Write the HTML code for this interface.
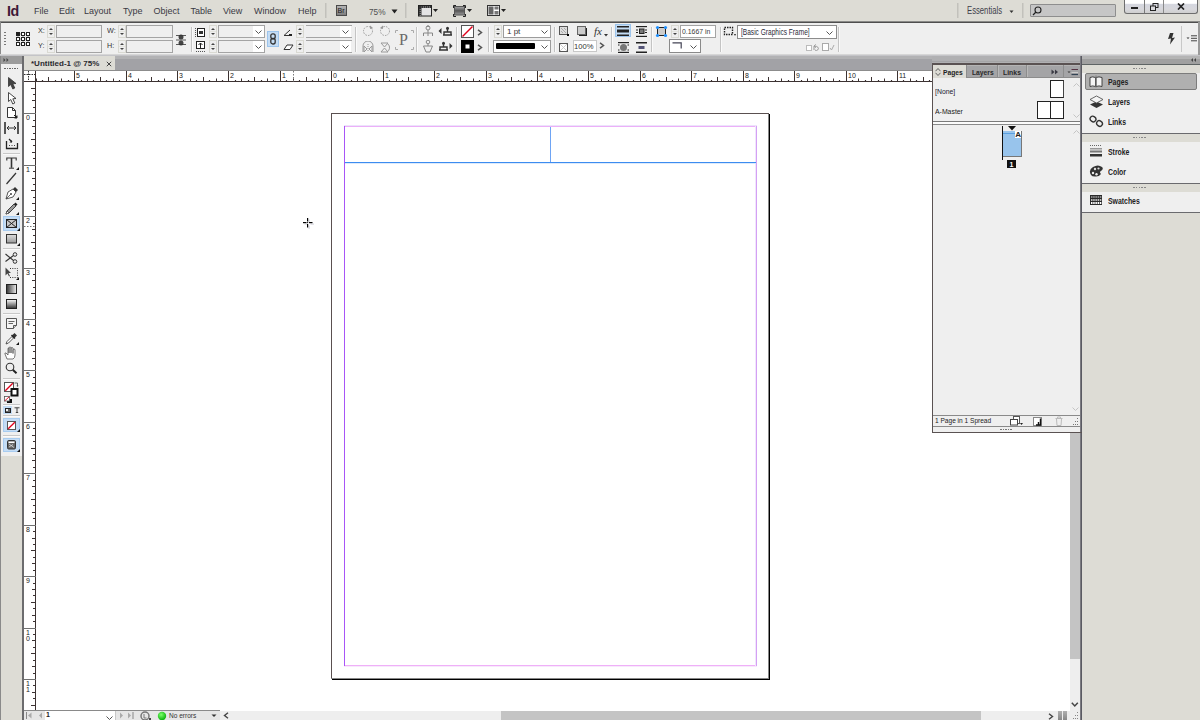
<!DOCTYPE html>
<html><head><meta charset="utf-8"><style>
html,body{margin:0;padding:0;}
body{width:1200px;height:720px;overflow:hidden;position:relative;background:#dddcd5;font-family:"Liberation Sans",sans-serif;}
div{position:absolute;}
.t{position:absolute;white-space:nowrap;line-height:1;}
</style></head><body>
<div style="left:0px;top:0px;width:1200px;height:22px;background:#dddcd5"></div><span class="t" style="left:7px;top:2.5px;font-size:15px;color:#3e1836;font-weight:700;transform:scaleX(0.95);transform-origin:0 0;letter-spacing:-0.6px">Id</span><span class="t" style="left:34px;top:7px;font-size:9px;color:#3a3a44;font-weight:400;">File</span><span class="t" style="left:59px;top:7px;font-size:9px;color:#3a3a44;font-weight:400;">Edit</span><span class="t" style="left:84px;top:7px;font-size:9px;color:#3a3a44;font-weight:400;">Layout</span><span class="t" style="left:123px;top:7px;font-size:9px;color:#3a3a44;font-weight:400;">Type</span><span class="t" style="left:153.5px;top:7px;font-size:9px;color:#3a3a44;font-weight:400;">Object</span><span class="t" style="left:190.5px;top:7px;font-size:9px;color:#3a3a44;font-weight:400;">Table</span><span class="t" style="left:223px;top:7px;font-size:9px;color:#3a3a44;font-weight:400;">View</span><span class="t" style="left:254px;top:7px;font-size:9px;color:#3a3a44;font-weight:400;">Window</span><span class="t" style="left:298px;top:7px;font-size:9px;color:#3a3a44;font-weight:400;">Help</span><div style="left:325px;top:3px;width:1px;height:15px;background:#c2c1bb"></div><div style="left:326px;top:3px;width:1px;height:15px;background:#cfcec8"></div><div style="left:336px;top:5px;width:11px;height:11px;background:linear-gradient(#b4b4b4,#7e7e7e);border:1px solid #4a4a4a;box-sizing:border-box"></div><span class="t" style="left:337.6px;top:6.8px;font-size:7px;color:#1a1a1a;font-weight:400;">Br</span><span class="t" style="left:369px;top:6.5px;font-size:9.5px;color:#505050;font-weight:400;transform:scaleX(0.87);transform-origin:0 0;">75%</span><svg style="position:absolute;left:391px;top:9px;" width="7" height="5" viewBox="0 0 7 5"><path d="M0.5 0.5 L6.5 0.5 L3.5 4.5Z" fill="#222"/></svg><div style="left:405px;top:3px;width:1px;height:15px;background:#c2c1bb"></div><div style="left:406px;top:3px;width:1px;height:15px;background:#cfcec8"></div><svg style="position:absolute;left:418px;top:5px;" width="21" height="12" viewBox="0 0 21 12"><rect x="0.5" y="0.5" width="13" height="10.5" fill="#e4e4e4" stroke="#222"/><rect x="1" y="1" width="12" height="2" fill="#333"/><path d="M3 2 H13" stroke="#bbb" stroke-width="0.8" stroke-dasharray="1 1"/><rect x="1" y="1" width="2.5" height="10" fill="#333"/><path d="M2.2 4 V11" stroke="#bbb" stroke-width="0.8" stroke-dasharray="1 1"/><path d="M15 4 L20 4 L17.5 7Z" fill="#222"/></svg><svg style="position:absolute;left:453px;top:5px;" width="20" height="12" viewBox="0 0 20 12"><rect x="1.5" y="1.5" width="10" height="8.5" fill="url(#g1)" stroke="#555"/><path d="M0.5 3 V0.5 H3 M10 0.5 H12.5 V3 M0.5 9 V11.5 H3 M10 11.5 H12.5 V9" fill="none" stroke="#222"/><path d="M14 4 L19 4 L16.5 7Z" fill="#222"/><defs><linearGradient id="g1" x1="0" y1="0" x2="0" y2="1"><stop offset="0" stop-color="#aaa"/><stop offset="0.5" stop-color="#555"/><stop offset="1" stop-color="#999"/></linearGradient></defs></svg><svg style="position:absolute;left:487px;top:5px;" width="20" height="12" viewBox="0 0 20 12"><rect x="0.5" y="0.5" width="12" height="10" fill="#fff" stroke="#333"/><rect x="1.5" y="1.5" width="5" height="8" fill="#666"/><rect x="7.5" y="1.5" width="4" height="3" fill="#777"/><rect x="7.5" y="6" width="4" height="3.5" fill="#777"/><path d="M14 4 L19 4 L16.5 7Z" fill="#222"/></svg><div style="left:957px;top:3px;width:1px;height:15px;background:#c2c1bb"></div><div style="left:958px;top:3px;width:1px;height:15px;background:#cfcec8"></div><span class="t" style="left:967px;top:5.5px;font-size:10px;color:#3e3e4a;font-weight:400;transform:scaleX(0.77);transform-origin:0 0;">Essentials</span><svg style="position:absolute;left:1009px;top:10px;" width="5" height="4" viewBox="0 0 5 4"><path d="M0.5 0.5 L4.5 0.5 L2.5 3Z" fill="#333"/></svg><div style="left:1022px;top:3px;width:1px;height:15px;background:#c2c1bb"></div><div style="left:1023px;top:3px;width:1px;height:15px;background:#cfcec8"></div><div style="left:1030px;top:4px;width:86px;height:13px;background:#c6c6c6;border:1px solid #8e8e8e;box-sizing:border-box;border-radius:1px"></div><svg style="position:absolute;left:1032px;top:6px;" width="10" height="10" viewBox="0 0 10 10"><circle cx="6" cy="4" r="3" fill="none" stroke="#222" stroke-width="1.1"/><path d="M4 6 L1 9" stroke="#222" stroke-width="1.3"/></svg><div style="left:1124px;top:0px;width:74px;height:14px;background:linear-gradient(#ffffff 0,#ffffff 25%,#d4d6de 35%,#d8d8dc 70%,#cfcfcf 100%);border:1px solid #6e6e6e;border-top:none;box-sizing:border-box;border-radius:0 0 3px 3px"></div><div style="left:1144px;top:0px;width:1px;height:13px;background:#7a7a7a"></div><div style="left:1163px;top:0px;width:1px;height:13px;background:#8a8a8a"></div><div style="left:1131px;top:7px;width:7px;height:2px;background:#222"></div><svg style="position:absolute;left:1150px;top:3px;" width="9" height="8" viewBox="0 0 9 8"><rect x="3" y="0.5" width="5" height="4" fill="none" stroke="#222" stroke-width="1"/><rect x="0.5" y="3" width="5" height="4.5" fill="#d8d8dc" stroke="#222" stroke-width="1"/></svg><svg style="position:absolute;left:1177px;top:3px;" width="8" height="7" viewBox="0 0 8 7"><path d="M1 0.5 L7 6.5 M7 0.5 L1 6.5" stroke="#222" stroke-width="1.7"/></svg><div style="left:0px;top:22px;width:1200px;height:33px;background:#efefef"></div><div style="left:0px;top:21px;width:1200px;height:1px;background:#8a8a88"></div><div style="left:0px;top:22px;width:1200px;height:1px;background:#4e4e4e"></div><div style="left:0px;top:22px;width:1px;height:34px;background:#8a8a8a"></div><div style="left:0px;top:54px;width:1200px;height:1px;background:#d6d6d6"></div><div style="left:1198px;top:22px;width:2px;height:33px;background:#9a9a9a"></div><div style="left:0px;top:55px;width:1200px;height:1px;background:#c4c4c8"></div><div style="left:4px;top:32px;width:2px;height:1px;background:#777"></div><div style="left:4px;top:35px;width:2px;height:1px;background:#777"></div><div style="left:4px;top:38px;width:2px;height:1px;background:#777"></div><div style="left:4px;top:41px;width:2px;height:1px;background:#777"></div><div style="left:4px;top:44px;width:2px;height:1px;background:#777"></div><svg style="position:absolute;left:0px;top:0px;" width="32" height="50" viewBox="0 0 32 50"><path d="M18 34 V44 M23 34 V44 M28 34 V44 M18 34 H28 M18 39 H28 M18 44 H28" stroke="#999" stroke-width="1"/><rect x="16" y="32" width="4" height="4" fill="#222"/><rect x="21" y="32" width="4" height="4" fill="#222"/><rect x="22" y="33" width="2" height="2" fill="#fff"/><rect x="26" y="32" width="4" height="4" fill="#222"/><rect x="27" y="33" width="2" height="2" fill="#fff"/><rect x="16" y="37" width="4" height="4" fill="#222"/><rect x="17" y="38" width="2" height="2" fill="#fff"/><rect x="21" y="37" width="4" height="4" fill="#222"/><rect x="22" y="38" width="2" height="2" fill="#fff"/><rect x="26" y="37" width="4" height="4" fill="#222"/><rect x="27" y="38" width="2" height="2" fill="#fff"/><rect x="16" y="42" width="4" height="4" fill="#222"/><rect x="17" y="43" width="2" height="2" fill="#fff"/><rect x="21" y="42" width="4" height="4" fill="#222"/><rect x="22" y="43" width="2" height="2" fill="#fff"/><rect x="26" y="42" width="4" height="4" fill="#222"/><rect x="27" y="43" width="2" height="2" fill="#fff"/></svg><span class="t" style="left:38px;top:27px;font-size:8px;color:#333;font-weight:400;transform:scaleX(0.9);transform-origin:0 0;">X:</span><span class="t" style="left:38px;top:42px;font-size:8px;color:#333;font-weight:400;transform:scaleX(0.9);transform-origin:0 0;">Y:</span><div style="left:47px;top:25px;width:8px;height:13px;border:1px solid #d9d9d2;box-sizing:border-box;background:#efefef"></div><svg style="position:absolute;left:49px;top:28px;" width="4" height="2" viewBox="0 0 4 2"><path d="M0 2 L2 0 L4 2Z" fill="#444"/></svg><svg style="position:absolute;left:49px;top:33px;" width="4" height="2" viewBox="0 0 4 2"><path d="M0 0 L4 0 L2 2Z" fill="#444"/></svg><div style="left:48px;top:31px;width:6px;height:1px;background:#e4e4de"></div><div style="left:56px;top:25px;width:46px;height:13px;background:#efefef;border:1px solid #a4a4a4;box-sizing:border-box"></div><div style="left:47px;top:40px;width:8px;height:13px;border:1px solid #d9d9d2;box-sizing:border-box;background:#efefef"></div><svg style="position:absolute;left:49px;top:43px;" width="4" height="2" viewBox="0 0 4 2"><path d="M0 2 L2 0 L4 2Z" fill="#444"/></svg><svg style="position:absolute;left:49px;top:48px;" width="4" height="2" viewBox="0 0 4 2"><path d="M0 0 L4 0 L2 2Z" fill="#444"/></svg><div style="left:48px;top:46px;width:6px;height:1px;background:#e4e4de"></div><div style="left:56px;top:40px;width:46px;height:13px;background:#efefef;border:1px solid #a4a4a4;box-sizing:border-box"></div><span class="t" style="left:107px;top:27px;font-size:8px;color:#333;font-weight:400;transform:scaleX(0.9);transform-origin:0 0;">W:</span><span class="t" style="left:107px;top:42px;font-size:8px;color:#333;font-weight:400;transform:scaleX(0.9);transform-origin:0 0;">H:</span><div style="left:118px;top:25px;width:8px;height:13px;border:1px solid #d9d9d2;box-sizing:border-box;background:#efefef"></div><svg style="position:absolute;left:120px;top:28px;" width="4" height="2" viewBox="0 0 4 2"><path d="M0 2 L2 0 L4 2Z" fill="#444"/></svg><svg style="position:absolute;left:120px;top:33px;" width="4" height="2" viewBox="0 0 4 2"><path d="M0 0 L4 0 L2 2Z" fill="#444"/></svg><div style="left:119px;top:31px;width:6px;height:1px;background:#e4e4de"></div><div style="left:126px;top:25px;width:47px;height:13px;background:#efefef;border:1px solid #a4a4a4;box-sizing:border-box"></div><div style="left:118px;top:40px;width:8px;height:13px;border:1px solid #d9d9d2;box-sizing:border-box;background:#efefef"></div><svg style="position:absolute;left:120px;top:43px;" width="4" height="2" viewBox="0 0 4 2"><path d="M0 2 L2 0 L4 2Z" fill="#444"/></svg><svg style="position:absolute;left:120px;top:48px;" width="4" height="2" viewBox="0 0 4 2"><path d="M0 0 L4 0 L2 2Z" fill="#444"/></svg><div style="left:119px;top:46px;width:6px;height:1px;background:#e4e4de"></div><div style="left:126px;top:40px;width:47px;height:13px;background:#efefef;border:1px solid #a4a4a4;box-sizing:border-box"></div><svg style="position:absolute;left:175px;top:34px;" width="12" height="12" viewBox="0 0 12 12"><ellipse cx="6" cy="3" rx="2.5" ry="2.5" fill="#444"/><ellipse cx="6" cy="9" rx="2.5" ry="2.5" fill="#444"/><path d="M1 1.5 L11 1.5 M1 6 L11 6 M1 10.5 L11 10.5" stroke="#333" stroke-width="0.8"/></svg><div style="left:191px;top:27px;width:1px;height:25px;background:#c4c4c4"></div><div style="left:192px;top:27px;width:1px;height:25px;background:#fafafa"></div><svg style="position:absolute;left:195px;top:27px;" width="11" height="11" viewBox="0 0 11 11"><rect x="2.5" y="1.5" width="7" height="8" fill="#fff" stroke="#222"/><rect x="4" y="4" width="4" height="3" fill="#333"/><path d="M0.5 1 V10" stroke="#555" stroke-dasharray="1 1"/></svg><svg style="position:absolute;left:195px;top:41px;" width="11" height="12" viewBox="0 0 11 12"><rect x="1.5" y="0.5" width="8" height="7" fill="#fff" stroke="#222"/><path d="M5.5 2 V7 M3.5 4 L5.5 2 L7.5 4" stroke="#222" fill="none"/><path d="M1 10.5 H10" stroke="#555" stroke-dasharray="1 1"/></svg><div style="left:209px;top:25px;width:8px;height:13px;border:1px solid #d9d9d2;box-sizing:border-box;background:#efefef"></div><svg style="position:absolute;left:211px;top:28px;" width="4" height="2" viewBox="0 0 4 2"><path d="M0 2 L2 0 L4 2Z" fill="#444"/></svg><svg style="position:absolute;left:211px;top:33px;" width="4" height="2" viewBox="0 0 4 2"><path d="M0 0 L4 0 L2 2Z" fill="#444"/></svg><div style="left:210px;top:31px;width:6px;height:1px;background:#e4e4de"></div><div style="left:218px;top:25px;width:47px;height:13px;background:#efefef;border:1px solid #a4a4a4;box-sizing:border-box"></div><div style="left:253px;top:26px;width:11px;height:11px;background:#fff"></div><svg style="position:absolute;left:255px;top:30px;" width="7" height="4" viewBox="0 0 7 4"><path d="M0.5 0.5 L3.5 3.5 L6.5 0.5" fill="none" stroke="#555" stroke-width="1"/></svg><div style="left:209px;top:40px;width:8px;height:13px;border:1px solid #d9d9d2;box-sizing:border-box;background:#efefef"></div><svg style="position:absolute;left:211px;top:43px;" width="4" height="2" viewBox="0 0 4 2"><path d="M0 2 L2 0 L4 2Z" fill="#444"/></svg><svg style="position:absolute;left:211px;top:48px;" width="4" height="2" viewBox="0 0 4 2"><path d="M0 0 L4 0 L2 2Z" fill="#444"/></svg><div style="left:210px;top:46px;width:6px;height:1px;background:#e4e4de"></div><div style="left:218px;top:40px;width:47px;height:13px;background:#efefef;border:1px solid #a4a4a4;box-sizing:border-box"></div><div style="left:253px;top:41px;width:11px;height:11px;background:#fff"></div><svg style="position:absolute;left:255px;top:45px;" width="7" height="4" viewBox="0 0 7 4"><path d="M0.5 0.5 L3.5 3.5 L6.5 0.5" fill="none" stroke="#555" stroke-width="1"/></svg><div style="left:267px;top:31px;width:12px;height:16px;background:#c4dcf4;border:1px solid #9cc4ec;box-sizing:border-box"></div><svg style="position:absolute;left:270px;top:33px;" width="6" height="12" viewBox="0 0 6 12"><rect x="0.8" y="0.8" width="4.4" height="5" rx="2" fill="none" stroke="#333" stroke-width="1.3"/><rect x="0.8" y="5.5" width="4.4" height="5.5" rx="2" fill="none" stroke="#333" stroke-width="1.3"/></svg><svg style="position:absolute;left:283px;top:29px;" width="10" height="8" viewBox="0 0 10 8"><path d="M1 6.5 L7 1 M1 6.5 H9" stroke="#333" stroke-width="1"/><rect x="6" y="5" width="3" height="2" fill="#222"/></svg><svg style="position:absolute;left:283px;top:44px;" width="11" height="7" viewBox="0 0 11 7"><path d="M1 5.5 L4 1 H10 L7 5.5Z" fill="#fff" stroke="#333" stroke-width="1"/></svg><div style="left:296px;top:25px;width:8px;height:13px;border:1px solid #d9d9d2;box-sizing:border-box;background:#efefef"></div><svg style="position:absolute;left:298px;top:28px;" width="4" height="2" viewBox="0 0 4 2"><path d="M0 2 L2 0 L4 2Z" fill="#444"/></svg><svg style="position:absolute;left:298px;top:33px;" width="4" height="2" viewBox="0 0 4 2"><path d="M0 0 L4 0 L2 2Z" fill="#444"/></svg><div style="left:297px;top:31px;width:6px;height:1px;background:#e4e4de"></div><div style="left:306px;top:25px;width:46px;height:13px;background:#efefef;border:1px solid #a4a4a4;border-left:none;border-right:none;box-sizing:border-box"></div><div style="left:340px;top:26px;width:11px;height:11px;background:#fff"></div><svg style="position:absolute;left:342px;top:30px;" width="7" height="4" viewBox="0 0 7 4"><path d="M0.5 0.5 L3.5 3.5 L6.5 0.5" fill="none" stroke="#555" stroke-width="1"/></svg><div style="left:296px;top:40px;width:8px;height:13px;border:1px solid #d9d9d2;box-sizing:border-box;background:#efefef"></div><svg style="position:absolute;left:298px;top:43px;" width="4" height="2" viewBox="0 0 4 2"><path d="M0 2 L2 0 L4 2Z" fill="#444"/></svg><svg style="position:absolute;left:298px;top:48px;" width="4" height="2" viewBox="0 0 4 2"><path d="M0 0 L4 0 L2 2Z" fill="#444"/></svg><div style="left:297px;top:46px;width:6px;height:1px;background:#e4e4de"></div><div style="left:306px;top:40px;width:46px;height:13px;background:#efefef;border:1px solid #a4a4a4;border-left:none;border-right:none;box-sizing:border-box"></div><div style="left:340px;top:41px;width:11px;height:11px;background:#fff"></div><svg style="position:absolute;left:342px;top:45px;" width="7" height="4" viewBox="0 0 7 4"><path d="M0.5 0.5 L3.5 3.5 L6.5 0.5" fill="none" stroke="#555" stroke-width="1"/></svg><div style="left:355px;top:27px;width:1px;height:25px;background:#c4c4c4"></div><div style="left:356px;top:27px;width:1px;height:25px;background:#fafafa"></div><svg style="position:absolute;left:362px;top:25px;" width="12" height="12" viewBox="0 0 12 12"><circle cx="6" cy="6" r="4.5" fill="none" stroke="#999" stroke-dasharray="1.5 1.2"/><path d="M8 0.5 L11 3 L8 4Z" fill="#999"/></svg><svg style="position:absolute;left:379px;top:25px;" width="12" height="12" viewBox="0 0 12 12"><circle cx="6" cy="6" r="4.5" fill="none" stroke="#999" stroke-dasharray="1.5 1.2"/><path d="M4 0.5 L1 3 L4 4Z" fill="#999"/></svg><svg style="position:absolute;left:362px;top:41px;" width="12" height="12" viewBox="0 0 12 12"><path d="M1 11 V5 A5 5 0 0 1 11 5 V11" fill="none" stroke="#999"/><path d="M2 5 L5 8 L2 11Z M10 5 L7 8 L10 11Z" fill="none" stroke="#999"/><path d="M6 3 V11" stroke="#999" stroke-dasharray="1 1"/></svg><svg style="position:absolute;left:379px;top:41px;" width="12" height="12" viewBox="0 0 12 12"><path d="M2 2 H9 L5.5 6 Z M2 11 H9 L5.5 7Z" fill="none" stroke="#999"/><path d="M9 3 A5 5 0 0 1 8 11" fill="none" stroke="#999"/></svg><svg style="position:absolute;left:394px;top:29px;" width="21" height="22" viewBox="0 0 21 22"><path d="M1.5 4 V1.5 H4 M17 1.5 H19.5 V4 M1.5 18 V20.5 H4 M17 20.5 H19.5 V18" stroke="#aaa" fill="none"/></svg><span class="t" style="left:399px;top:32px;font-size:16px;color:#6a6a6a;font-weight:400;font-family:'Liberation Serif',serif;">P</span><div style="left:416px;top:27px;width:1px;height:25px;background:#c4c4c4"></div><div style="left:417px;top:27px;width:1px;height:25px;background:#fafafa"></div><svg style="position:absolute;left:422px;top:25px;" width="12" height="13" viewBox="0 0 12 13"><circle cx="6" cy="3" r="2" fill="none" stroke="#888"/><path d="M6 5 V8 M1.5 8 H10.5 M1.5 8 V11 M6 8 V11 M10.5 8 V11" stroke="#888" fill="none"/><path d="M4 2 L6 0 L8 2" fill="#888"/></svg><svg style="position:absolute;left:422px;top:40px;" width="12" height="13" viewBox="0 0 12 13"><circle cx="6" cy="2" r="1.8" fill="none" stroke="#888"/><path d="M6 4 V6 M1.5 6 H10.5 L8 12 H4 Z" stroke="#888" fill="none"/></svg><svg style="position:absolute;left:438px;top:26px;" width="15" height="11" viewBox="0 0 15 11"><path d="M0.5 5 L3.5 2 V8Z" fill="#333"/><path d="M5 9 H14 M6 9 V6 H13 V9 M9.5 6 V3" stroke="#333" fill="none" stroke-width="1.4"/><circle cx="9.5" cy="2.2" r="1.5" fill="#333"/></svg><svg style="position:absolute;left:438px;top:41px;" width="15" height="11" viewBox="0 0 15 11"><path d="M14.5 5 L11.5 2 V8Z" fill="#333"/><path d="M1 9 H10 M2 9 V6 H9 V9 M5.5 6 V3" stroke="#333" fill="none" stroke-width="1.4"/><circle cx="5.5" cy="2.2" r="1.5" fill="#333"/></svg><div style="left:456px;top:27px;width:1px;height:25px;background:#c4c4c4"></div><div style="left:457px;top:27px;width:1px;height:25px;background:#fafafa"></div><svg style="position:absolute;left:461px;top:25px;" width="13" height="13" viewBox="0 0 13 13"><rect x="0.5" y="0.5" width="12" height="12" fill="#fff" stroke="#555"/><path d="M1.5 11.5 L11.5 1.5" stroke="#e0001a" stroke-width="1.4"/></svg><svg style="position:absolute;left:461px;top:40px;" width="13" height="13" viewBox="0 0 13 13"><rect x="0" y="0" width="13" height="13" fill="#000"/><rect x="4.5" y="4.5" width="4" height="4" fill="#fff"/></svg><svg style="position:absolute;left:477px;top:29px;" width="6" height="7" viewBox="0 0 6 7"><path d="M1 0.8 L4.5 3.5 L1 6.2" fill="none" stroke="#555" stroke-width="1.5"/></svg><svg style="position:absolute;left:477px;top:44px;" width="6" height="7" viewBox="0 0 6 7"><path d="M1 0.8 L4.5 3.5 L1 6.2" fill="none" stroke="#555" stroke-width="1.5"/></svg><div style="left:488px;top:27px;width:1px;height:25px;background:#c4c4c4"></div><div style="left:489px;top:27px;width:1px;height:25px;background:#fafafa"></div><div style="left:494px;top:25px;width:8px;height:13px;border:1px solid #d9d9d2;box-sizing:border-box;background:#efefef"></div><svg style="position:absolute;left:496px;top:28px;" width="4" height="2" viewBox="0 0 4 2"><path d="M0 2 L2 0 L4 2Z" fill="#444"/></svg><svg style="position:absolute;left:496px;top:33px;" width="4" height="2" viewBox="0 0 4 2"><path d="M0 0 L4 0 L2 2Z" fill="#444"/></svg><div style="left:495px;top:31px;width:6px;height:1px;background:#e4e4de"></div><div style="left:503px;top:25px;width:48px;height:13px;background:#fff;border:1px solid #9c9c9c;box-sizing:border-box"></div><span class="t" style="left:507px;top:27.5px;font-size:8px;color:#333;font-weight:400;">1 pt</span><svg style="position:absolute;left:541px;top:30px;" width="7" height="4" viewBox="0 0 7 4"><path d="M0.5 0.5 L3.5 3.5 L6.5 0.5" fill="none" stroke="#555" stroke-width="1"/></svg><div style="left:493px;top:40px;width:58px;height:13px;background:#fff;border:1px solid #9c9c9c;box-sizing:border-box"></div><div style="left:496px;top:43px;width:39px;height:6px;background:#000;border-radius:1px"></div><svg style="position:absolute;left:541px;top:45px;" width="7" height="4" viewBox="0 0 7 4"><path d="M0.5 0.5 L3.5 3.5 L6.5 0.5" fill="none" stroke="#555" stroke-width="1"/></svg><div style="left:554px;top:27px;width:1px;height:25px;background:#c4c4c4"></div><div style="left:555px;top:27px;width:1px;height:25px;background:#fafafa"></div><svg style="position:absolute;left:559px;top:26px;" width="11" height="11" viewBox="0 0 11 11"><rect x="0.5" y="0.5" width="8" height="8" fill="#ddd" stroke="#555"/><path d="M2 2 L7 7 M2 5 L4 7 M5 2 L7 4" stroke="#aaa"/><rect x="8" y="8" width="2" height="2" fill="#000"/></svg><svg style="position:absolute;left:577px;top:26px;" width="10" height="11" viewBox="0 0 10 11"><rect x="2" y="2" width="8" height="8" fill="#222"/><rect x="0.5" y="0.5" width="8" height="8" fill="#ccc" stroke="#666"/></svg><span class="t" style="left:594px;top:26px;font-size:11px;color:#333;font-weight:400;font-style:italic;font-family:'Liberation Serif',serif;">fx</span><svg style="position:absolute;left:604px;top:34px;" width="4" height="3" viewBox="0 0 4 3"><path d="M0 0 H4 L2 2.5Z" fill="#333"/></svg><svg style="position:absolute;left:559px;top:43px;" width="9" height="9" viewBox="0 0 9 9"><rect x="0.5" y="0.5" width="8" height="8" fill="#fff" stroke="#555"/><path d="M1 1 L8 8 M8 1 L1 8" stroke="#ccc"/></svg><div style="left:573px;top:40px;width:24px;height:12px;background:#fff;border:1px solid #c8c8c8;box-sizing:border-box"></div><span class="t" style="left:574px;top:43px;font-size:8px;color:#333;font-weight:400;transform:scaleX(0.95);transform-origin:0 0;">100%</span><svg style="position:absolute;left:599px;top:42px;" width="6" height="7" viewBox="0 0 6 7"><path d="M1 0.8 L4.5 3.5 L1 6.2" fill="none" stroke="#555" stroke-width="1.5"/></svg><div style="left:611px;top:27px;width:1px;height:25px;background:#c4c4c4"></div><div style="left:612px;top:27px;width:1px;height:25px;background:#fafafa"></div><div style="left:615px;top:24px;width:16px;height:13px;background:#c4dcf4;border:1px solid #9cc4ec;box-sizing:border-box"></div><svg style="position:absolute;left:617px;top:26px;" width="12" height="10" viewBox="0 0 12 10"><rect x="0" y="0" width="12" height="1.5" fill="#222"/><rect x="0" y="3.5" width="12" height="3" fill="#222"/><rect x="0" y="8.5" width="12" height="1.5" fill="#222"/></svg><svg style="position:absolute;left:636px;top:26px;" width="11" height="11" viewBox="0 0 11 11"><rect x="0" y="0" width="11" height="1.2" fill="#222"/><rect x="0" y="9.8" width="11" height="1.2" fill="#222"/><rect x="3.5" y="3" width="4.5" height="4.5" fill="#777" stroke="#222"/><path d="M0 4 H2 M0 6.5 H2 M9 4 H11 M9 6.5 H11" stroke="#222"/></svg><svg style="position:absolute;left:618px;top:42px;" width="11" height="11" viewBox="0 0 11 11"><rect x="0" y="0" width="11" height="1.2" fill="#222"/><rect x="0" y="9.8" width="11" height="1.2" fill="#222"/><circle cx="5.5" cy="5.5" r="3.5" fill="#777"/><path d="M0 3 H1.5 M0 8 H1.5 M9.5 3 H11 M9.5 8 H11" stroke="#222"/></svg><svg style="position:absolute;left:636px;top:42px;" width="11" height="11" viewBox="0 0 11 11"><rect x="0" y="0" width="11" height="1.5" fill="#222"/><rect x="0" y="9.5" width="11" height="1.5" fill="#222"/><rect x="2.5" y="4" width="6" height="3" fill="#557"/></svg><div style="left:651px;top:27px;width:1px;height:25px;background:#c4c4c4"></div><div style="left:652px;top:27px;width:1px;height:25px;background:#fafafa"></div><svg style="position:absolute;left:655px;top:25px;" width="13" height="13" viewBox="0 0 13 13"><rect x="2.5" y="2.5" width="8" height="8" fill="#ccc" stroke="#222"/><circle cx="2.5" cy="2.5" r="1.6" fill="#1e90ff"/><circle cx="10.5" cy="2.5" r="1.6" fill="#1e90ff"/><circle cx="2.5" cy="10.5" r="1.6" fill="#1e90ff"/><circle cx="10.5" cy="10.5" r="1.6" fill="#1e90ff"/></svg><div style="left:671px;top:25px;width:8px;height:13px;border:1px solid #d9d9d2;box-sizing:border-box;background:#efefef"></div><svg style="position:absolute;left:673px;top:28px;" width="4" height="2" viewBox="0 0 4 2"><path d="M0 2 L2 0 L4 2Z" fill="#444"/></svg><svg style="position:absolute;left:673px;top:33px;" width="4" height="2" viewBox="0 0 4 2"><path d="M0 0 L4 0 L2 2Z" fill="#444"/></svg><div style="left:672px;top:31px;width:6px;height:1px;background:#e4e4de"></div><div style="left:680px;top:25px;width:36px;height:13px;background:#fff;border:1px solid #a4a4a4;box-sizing:border-box"></div><span class="t" style="left:682px;top:27.5px;font-size:8px;color:#3a3a3a;font-weight:400;transform:scaleX(0.86);transform-origin:0 0;">0.1667 in</span><div style="left:669px;top:39px;width:32px;height:14px;background:#fff;border:1px solid #8a8a8a;box-sizing:border-box"></div><svg style="position:absolute;left:672px;top:42px;" width="11" height="7" viewBox="0 0 11 7"><path d="M0.5 0.8 H9.2 V6.5" fill="none" stroke="#445" stroke-width="1.2"/></svg><svg style="position:absolute;left:690px;top:45px;" width="7" height="4" viewBox="0 0 7 4"><path d="M0.5 0.5 L3.5 3.5 L6.5 0.5" fill="none" stroke="#555" stroke-width="1"/></svg><div style="left:720px;top:27px;width:1px;height:25px;background:#c4c4c4"></div><div style="left:721px;top:27px;width:1px;height:25px;background:#fafafa"></div><svg style="position:absolute;left:723px;top:26px;" width="14" height="11" viewBox="0 0 14 11"><rect x="1.5" y="1.5" width="8" height="7" fill="#eee" stroke="#222" stroke-dasharray="1.5 1" stroke-width="1.4"/><path d="M11 8 L13 8 L12 10Z" fill="#222"/></svg><div style="left:737px;top:25px;width:100px;height:14px;background:#fff;border:1px solid #8c8c8c;box-sizing:border-box"></div><span class="t" style="left:741px;top:27.5px;font-size:9px;color:#2a2a38;font-weight:400;transform:scaleX(0.73);transform-origin:0 0;">[Basic Graphics Frame]</span><svg style="position:absolute;left:826px;top:31px;" width="7" height="4" viewBox="0 0 7 4"><path d="M0.5 0.5 L3.5 3.5 L6.5 0.5" fill="none" stroke="#555" stroke-width="1"/></svg><svg style="position:absolute;left:806px;top:44px;" width="13" height="7" viewBox="0 0 13 7"><rect x="0.5" y="1.5" width="5" height="5" fill="#fff" stroke="#bbb"/><path d="M8 6 V2 L10 0.5 M8 2 L10 3.5" stroke="#999" fill="none"/><path d="M9 3 A2 2 0 1 1 9 6" stroke="#999" fill="none"/></svg><svg style="position:absolute;left:822px;top:43px;" width="13" height="8" viewBox="0 0 13 8"><rect x="0.5" y="0.5" width="6" height="7" fill="#fff" stroke="#aaa"/><path d="M8 5 L9.5 7 L12 2" stroke="#aaa" fill="none"/></svg><div style="left:838px;top:27px;width:1px;height:25px;background:#c4c4c4"></div><div style="left:839px;top:27px;width:1px;height:25px;background:#fafafa"></div><svg style="position:absolute;left:1167px;top:33px;" width="9" height="12" viewBox="0 0 9 12"><path d="M3 0 L1 6 L4 5.5 L3 11.5 L8 4.5 L5 5 L6.5 0Z" fill="#333"/></svg><div style="left:1181px;top:26px;width:1px;height:26px;background:#c8c8c8"></div><svg style="position:absolute;left:1186px;top:35px;" width="12" height="7" viewBox="0 0 12 7"><path d="M0.5 2.5 H3.5 L2 4Z" fill="#333"/><path d="M5 0.8 H11 M5 3.3 H11 M5 5.8 H11" stroke="#444" stroke-width="1"/></svg><div style="left:24px;top:56px;width:1058px;height:14px;background:#a2a2a6"></div><div style="left:24px;top:56px;width:1058px;height:3px;background:#b2b2b4"></div><div style="left:24px;top:56px;width:91px;height:14px;background:#dddcd5"></div><span class="t" style="left:31px;top:59.5px;font-size:8px;color:#2a2a30;font-weight:700;">*Untitled-1 @ 75%</span><svg style="position:absolute;left:106px;top:60.5px;" width="6" height="6" viewBox="0 0 6 6"><path d="M0.8 0.8 L5.2 5.2 M5.2 0.8 L0.8 5.2" stroke="#444" stroke-width="1"/></svg><div style="left:24px;top:70px;width:1058px;height:1px;background:#8c8c8c"></div><div style="left:0px;top:56px;width:24px;height:664px;background:#dddcd5"></div><div style="left:1px;top:56px;width:21px;height:8px;background:#9c9c9c"></div><div style="left:1px;top:64px;width:21px;height:392px;background:#efefef"></div><div style="left:0px;top:56px;width:1px;height:664px;background:#8a8a8a"></div><div style="left:22px;top:56px;width:2px;height:664px;background:#6c6c6e"></div><div style="left:4.0px;top:68px;width:1.5px;height:1px;background:#666"></div><div style="left:6.5px;top:68px;width:1.5px;height:1px;background:#666"></div><div style="left:9.0px;top:68px;width:1.5px;height:1px;background:#666"></div><div style="left:11.5px;top:68px;width:1.5px;height:1px;background:#666"></div><div style="left:14.0px;top:68px;width:1.5px;height:1px;background:#666"></div><div style="left:16.5px;top:68px;width:1.5px;height:1px;background:#666"></div><svg style="position:absolute;left:3px;top:58px;" width="7" height="4" viewBox="0 0 7 4"><path d="M0.5 0 L2.5 2 L0.5 4Z M3.5 0 L5.5 2 L3.5 4Z" fill="#444"/></svg><svg style="position:absolute;left:7px;top:77px;" width="10" height="13" viewBox="0 0 10 13"><path d="M1.5 0.5 L1.5 9.5 L3.8 7.5 L5.8 12 L7.8 11 L5.8 6.8 L9 6.5Z" fill="#444" stroke="#333" stroke-width="0.8"/></svg><svg style="position:absolute;left:7px;top:92px;" width="10" height="13" viewBox="0 0 10 13"><path d="M1.5 0.5 L1.5 9.5 L3.8 7.5 L5.8 12 L7.8 11 L5.8 6.8 L9 6.5Z" fill="#fff" stroke="#333" stroke-width="0.9"/></svg><svg style="position:absolute;left:6px;top:107px;" width="12" height="12" viewBox="0 0 12 12"><path d="M1.5 0.5 H6.5 L9.5 3.5 V10.5 H1.5Z" fill="#fff" stroke="#333"/><path d="M6.5 0.5 V3.5 H9.5" fill="none" stroke="#333"/><path d="M8 8 L11 11 M11 8.5 V11 H8.5" stroke="#222"/></svg><svg style="position:absolute;left:4px;top:122px;" width="15" height="12" viewBox="0 0 15 12"><rect x="0" y="0" width="2" height="12" fill="#555"/><rect x="13" y="0" width="2" height="12" fill="#555"/><path d="M3 6 H12 M5 4 L3 6 L5 8 M10 4 L12 6 L10 8" stroke="#333" fill="none" stroke-width="1"/></svg><svg style="position:absolute;left:5px;top:137px;" width="14" height="13" viewBox="0 0 14 13"><path d="M1.5 4 V11.5 H12.5 V6" fill="none" stroke="#222" stroke-width="1.3"/><path d="M4 2 L7 5" stroke="#222" stroke-width="1.3"/><path d="M7 3 V5.5 H4.5" fill="#222"/><rect x="4" y="8" width="1" height="1" fill="#444"/><rect x="6.5" y="8" width="1" height="1" fill="#444"/><rect x="9" y="8" width="1" height="1" fill="#444"/></svg><div style="left:3px;top:153px;width:17px;height:1px;background:#c8c8c8"></div><div style="left:3px;top:154px;width:17px;height:1px;background:#fafafa"></div><svg style="position:absolute;left:6px;top:157px;" width="11" height="12" viewBox="0 0 11 12"><path d="M0.8 3.5 V1 H10.2 V3.5" fill="none" stroke="#333" stroke-width="1.1"/><path d="M5.5 1 V10.8" stroke="#333" stroke-width="1.6"/><path d="M3 11.2 H8" stroke="#333" stroke-width="1"/></svg><svg style="position:absolute;left:16px;top:167px;" width="3" height="3" viewBox="0 0 3 3"><path d="M3 0 V3 H0Z" fill="#111"/></svg><svg style="position:absolute;left:6px;top:172px;" width="11" height="13" viewBox="0 0 11 13"><path d="M0.5 12 L10 1" stroke="#333" stroke-width="1.2"/></svg><svg style="position:absolute;left:5px;top:186px;" width="14" height="14" viewBox="0 0 14 14"><path d="M1 13 L3 6 L8 3 L11 6 L8 11Z" fill="#fff" stroke="#444" stroke-width="0.9"/><path d="M8 3 L10 1 L13 4 L11 6Z" fill="#333"/><path d="M1 13 L5.5 8.5" stroke="#444" stroke-width="0.8"/><circle cx="6" cy="8" r="1" fill="#444"/></svg><svg style="position:absolute;left:16px;top:197px;" width="3" height="3" viewBox="0 0 3 3"><path d="M3 0 V3 H0Z" fill="#111"/></svg><svg style="position:absolute;left:5px;top:202px;" width="14" height="13" viewBox="0 0 14 13"><path d="M1 12 L2 9 L9 2 L11 4 L4 11Z" fill="#999" stroke="#333" stroke-width="0.9"/><path d="M9 2 L10.5 0.5 L12.5 2.5 L11 4Z" fill="#222"/><path d="M1 12 L2 9 L4 11Z" fill="#fff" stroke="#333" stroke-width="0.6"/></svg><svg style="position:absolute;left:16px;top:212px;" width="3" height="3" viewBox="0 0 3 3"><path d="M3 0 V3 H0Z" fill="#111"/></svg><div style="left:3px;top:216px;width:17px;height:15px;background:#c4dcf4;border:1px solid #a8ccf0;box-sizing:border-box"></div><svg style="position:absolute;left:6px;top:219px;" width="11" height="9" viewBox="0 0 11 9"><rect x="0.5" y="0.5" width="10" height="8" fill="#c8c8c8" stroke="#222"/><path d="M0.5 0.5 L10.5 8.5 M10.5 0.5 L0.5 8.5" stroke="#222"/></svg><svg style="position:absolute;left:17px;top:228px;" width="3" height="3" viewBox="0 0 3 3"><path d="M3 0 V3 H0Z" fill="#111"/></svg><svg style="position:absolute;left:6px;top:234px;" width="11" height="10" viewBox="0 0 11 10"><rect x="0.5" y="0.5" width="10" height="8.5" fill="url(#gr)" stroke="#333"/><defs><linearGradient id="gr" x1="0" y1="0" x2="0" y2="1"><stop offset="0" stop-color="#ddd"/><stop offset="1" stop-color="#999"/></linearGradient></defs></svg><svg style="position:absolute;left:17px;top:243px;" width="3" height="3" viewBox="0 0 3 3"><path d="M3 0 V3 H0Z" fill="#111"/></svg><div style="left:3px;top:248px;width:17px;height:1px;background:#c8c8c8"></div><div style="left:3px;top:249px;width:17px;height:1px;background:#fafafa"></div><svg style="position:absolute;left:5px;top:252px;" width="13" height="12" viewBox="0 0 13 12"><circle cx="10" cy="2.5" r="1.8" fill="none" stroke="#333"/><circle cx="10" cy="9.5" r="1.8" fill="none" stroke="#333"/><path d="M0.5 2 L8.5 8.5 M0.5 9.5 L8.5 3.5" stroke="#333" stroke-width="1.1"/></svg><svg style="position:absolute;left:5px;top:267px;" width="14" height="13" viewBox="0 0 14 13"><path d="M0.5 0.5 L0.5 8.5 L2.5 6.5 L4 9.5 L5 9 L3.5 6 L6 6Z" fill="#444"/><path d="M5 1.5 H12.5 V10.5 H4" fill="none" stroke="#333" stroke-dasharray="1 1.3"/></svg><svg style="position:absolute;left:16px;top:277px;" width="3" height="3" viewBox="0 0 3 3"><path d="M3 0 V3 H0Z" fill="#111"/></svg><svg style="position:absolute;left:6px;top:284px;" width="11" height="10" viewBox="0 0 11 10"><rect x="0.5" y="0.5" width="10" height="9" fill="url(#gs)" stroke="#222"/><defs><linearGradient id="gs"><stop offset="0" stop-color="#333"/><stop offset="1" stop-color="#eee"/></linearGradient></defs></svg><svg style="position:absolute;left:6px;top:299px;" width="11" height="10" viewBox="0 0 11 10"><rect x="0.5" y="0.5" width="10" height="9" fill="url(#gf)" stroke="#222"/><defs><linearGradient id="gf" x1="0" y1="0" x2="0" y2="1"><stop offset="0" stop-color="#fff"/><stop offset="1" stop-color="#333"/></linearGradient></defs></svg><div style="left:3px;top:313px;width:17px;height:1px;background:#c8c8c8"></div><div style="left:3px;top:314px;width:17px;height:1px;background:#fafafa"></div><svg style="position:absolute;left:6px;top:318px;" width="11" height="12" viewBox="0 0 11 12"><path d="M0.5 0.5 H10.5 V7.5 L7.5 10.5 H0.5Z" fill="#f4f4f4" stroke="#555"/><path d="M2.5 3.5 H8.5 M2.5 5.5 H7" stroke="#666"/><path d="M7.5 10.5 V7.5 H10.5" fill="#ccc" stroke="#555"/></svg><svg style="position:absolute;left:5px;top:332px;" width="13" height="13" viewBox="0 0 13 13"><path d="M1 12 L2 9.5 L7 4.5 L8.5 6 L3.5 11Z" fill="#fff" stroke="#444" stroke-width="0.9"/><path d="M7 3.5 L9.5 1 L12 3.5 L9.5 6Z" fill="#333"/><path d="M6.5 3 L10 6.5" stroke="#222" stroke-width="1.5"/></svg><svg style="position:absolute;left:16px;top:342px;" width="3" height="3" viewBox="0 0 3 3"><path d="M3 0 V3 H0Z" fill="#111"/></svg><svg style="position:absolute;left:4px;top:346px;" width="14" height="14" viewBox="0 0 14 14"><path d="M3 13 L1 8 Q0.5 6.5 2 7 L4 9 V3 Q4 1.5 5 2 V7 V1.5 Q6 0.5 7 1.5 V7 V2 Q8 1 9 2 V7.5 V3.5 Q10 2.5 11 3.5 V9 Q11 12 9 13Z" fill="#fff" stroke="#555" stroke-width="0.8"/></svg><svg style="position:absolute;left:5px;top:362px;" width="13" height="12" viewBox="0 0 13 12"><circle cx="5" cy="5" r="3.8" fill="#eee" stroke="#333" stroke-width="1.1"/><path d="M7.8 7.8 L11.5 11.2" stroke="#222" stroke-width="2"/></svg><div style="left:3px;top:378px;width:17px;height:1px;background:#c8c8c8"></div><div style="left:3px;top:379px;width:17px;height:1px;background:#fafafa"></div><svg style="position:absolute;left:3px;top:381px;" width="17" height="23" viewBox="0 0 17 23"><rect x="1.5" y="1.5" width="9" height="9" fill="#fff" stroke="#555"/><path d="M2.3 9.8 L9.8 2.3" stroke="#e0001a" stroke-width="1.3"/><rect x="8.5" y="8" width="6" height="6.5" fill="#fff" stroke="#111" stroke-width="2"/><path d="M11.5 2 H14.5 V5" fill="none" stroke="#444" stroke-width="0.8"/><path d="M13.5 4.5 L14.5 6 L15.5 4.5Z" fill="#444"/><rect x="4" y="18" width="5" height="4" fill="#111"/><rect x="1.5" y="15.5" width="5" height="4.5" fill="#fff" stroke="#555" stroke-width="0.8"/><path d="M1.8 19.8 L6.2 15.8" stroke="#e0001a" stroke-width="0.9"/></svg><div style="left:3px;top:404px;width:17px;height:1px;background:#c8c8c8"></div><div style="left:3px;top:405px;width:17px;height:1px;background:#fafafa"></div><div style="left:3px;top:406px;width:9px;height:8px;background:#c4dcf4"></div><svg style="position:absolute;left:5px;top:408px;" width="6" height="5" viewBox="0 0 6 5"><rect x="0.5" y="0.5" width="5" height="4" fill="#666" stroke="#222"/><rect x="1" y="1" width="2" height="2" fill="#eee"/></svg><svg style="position:absolute;left:14px;top:407px;" width="6" height="6" viewBox="0 0 6 6"><path d="M0.5 0.8 H5.5 M3 0.8 V5.5 M1.8 5.5 H4.2" stroke="#444" stroke-width="1" fill="none"/></svg><div style="left:3px;top:415px;width:17px;height:1px;background:#c8c8c8"></div><div style="left:3px;top:416px;width:17px;height:1px;background:#fafafa"></div><div style="left:3px;top:418px;width:17px;height:14px;background:#c4dcf4;border:1px solid #a8ccf0;box-sizing:border-box"></div><svg style="position:absolute;left:7px;top:421px;" width="9" height="9" viewBox="0 0 9 9"><rect x="0.5" y="0.5" width="8" height="8" fill="#fff" stroke="#555"/><path d="M1.2 7.8 L7.8 1.2" stroke="#e0001a" stroke-width="1.3"/></svg><svg style="position:absolute;left:17px;top:429px;" width="3" height="3" viewBox="0 0 3 3"><path d="M3 0 V3 H0Z" fill="#111"/></svg><div style="left:3px;top:435px;width:17px;height:1px;background:#c8c8c8"></div><div style="left:3px;top:436px;width:17px;height:1px;background:#fafafa"></div><div style="left:3px;top:438px;width:17px;height:14px;background:#c4dcf4;border:1px solid #a8ccf0;box-sizing:border-box"></div><svg style="position:absolute;left:7px;top:440px;" width="9" height="10" viewBox="0 0 9 10"><rect x="0.5" y="0.5" width="8" height="8.5" rx="1.2" fill="#666" stroke="#333"/><rect x="1.5" y="1.5" width="6" height="1.5" fill="#fff"/><path d="M2 4 L7 7.5 M2 7 L6 4.5" stroke="#ddd" stroke-width="0.8"/></svg><svg style="position:absolute;left:17px;top:449px;" width="3" height="3" viewBox="0 0 3 3"><path d="M3 0 V3 H0Z" fill="#111"/></svg><div style="left:24px;top:71px;width:1046px;height:640px;background:#ffffff"></div><svg style="position:absolute;left:24px;top:71px;" width="1046" height="11" viewBox="0 0 1046 11"><rect x="0" y="0" width="1046" height="11" fill="#fff"/><rect x="0" y="10" width="1046" height="1" fill="#3c3232"/><path d="M12.5 7.5 V11" stroke="#3c3232" stroke-width="1"/><path d="M18.5 9 V11" stroke="#3c3232" stroke-width="1.2"/><path d="M24.5 6 V11" stroke="#3c3232" stroke-width="1"/><path d="M31.5 9 V11" stroke="#3c3232" stroke-width="1.2"/><path d="M37.5 7.5 V11" stroke="#3c3232" stroke-width="1"/><path d="M44.5 9 V11" stroke="#3c3232" stroke-width="1.2"/><path d="M50.5 0 V11" stroke="#3c3232" stroke-width="1"/><text x="52.0" y="7" font-size="7" fill="#222" font-family="Liberation Sans">5</text><path d="M57.5 9 V11" stroke="#3c3232" stroke-width="1.2"/><path d="M63.5 7.5 V11" stroke="#3c3232" stroke-width="1"/><path d="M69.5 9 V11" stroke="#3c3232" stroke-width="1.2"/><path d="M76.5 6 V11" stroke="#3c3232" stroke-width="1"/><path d="M82.5 9 V11" stroke="#3c3232" stroke-width="1.2"/><path d="M89.5 7.5 V11" stroke="#3c3232" stroke-width="1"/><path d="M95.5 9 V11" stroke="#3c3232" stroke-width="1.2"/><path d="M102.5 0 V11" stroke="#3c3232" stroke-width="1"/><text x="104.0" y="7" font-size="7" fill="#222" font-family="Liberation Sans">4</text><path d="M108.5 9 V11" stroke="#3c3232" stroke-width="1.2"/><path d="M114.5 7.5 V11" stroke="#3c3232" stroke-width="1"/><path d="M121.5 9 V11" stroke="#3c3232" stroke-width="1.2"/><path d="M127.5 6 V11" stroke="#3c3232" stroke-width="1"/><path d="M134.5 9 V11" stroke="#3c3232" stroke-width="1.2"/><path d="M140.5 7.5 V11" stroke="#3c3232" stroke-width="1"/><path d="M147.5 9 V11" stroke="#3c3232" stroke-width="1.2"/><path d="M153.5 0 V11" stroke="#3c3232" stroke-width="1"/><text x="155.0" y="7" font-size="7" fill="#222" font-family="Liberation Sans">3</text><path d="M159.5 9 V11" stroke="#3c3232" stroke-width="1.2"/><path d="M166.5 7.5 V11" stroke="#3c3232" stroke-width="1"/><path d="M172.5 9 V11" stroke="#3c3232" stroke-width="1.2"/><path d="M179.5 6 V11" stroke="#3c3232" stroke-width="1"/><path d="M185.5 9 V11" stroke="#3c3232" stroke-width="1.2"/><path d="M192.5 7.5 V11" stroke="#3c3232" stroke-width="1"/><path d="M198.5 9 V11" stroke="#3c3232" stroke-width="1.2"/><path d="M204.5 0 V11" stroke="#3c3232" stroke-width="1"/><text x="206.0" y="7" font-size="7" fill="#222" font-family="Liberation Sans">2</text><path d="M211.5 9 V11" stroke="#3c3232" stroke-width="1.2"/><path d="M217.5 7.5 V11" stroke="#3c3232" stroke-width="1"/><path d="M224.5 9 V11" stroke="#3c3232" stroke-width="1.2"/><path d="M230.5 6 V11" stroke="#3c3232" stroke-width="1"/><path d="M237.5 9 V11" stroke="#3c3232" stroke-width="1.2"/><path d="M243.5 7.5 V11" stroke="#3c3232" stroke-width="1"/><path d="M249.5 9 V11" stroke="#3c3232" stroke-width="1.2"/><path d="M256.5 0 V11" stroke="#3c3232" stroke-width="1"/><text x="258.0" y="7" font-size="7" fill="#222" font-family="Liberation Sans">1</text><path d="M262.5 9 V11" stroke="#3c3232" stroke-width="1.2"/><path d="M269.5 7.5 V11" stroke="#3c3232" stroke-width="1"/><path d="M275.5 9 V11" stroke="#3c3232" stroke-width="1.2"/><path d="M282.5 6 V11" stroke="#3c3232" stroke-width="1"/><path d="M288.5 9 V11" stroke="#3c3232" stroke-width="1.2"/><path d="M294.5 7.5 V11" stroke="#3c3232" stroke-width="1"/><path d="M301.5 9 V11" stroke="#3c3232" stroke-width="1.2"/><path d="M307.5 0 V11" stroke="#3c3232" stroke-width="1"/><text x="309.0" y="7" font-size="7" fill="#222" font-family="Liberation Sans">0</text><path d="M314.5 9 V11" stroke="#3c3232" stroke-width="1.2"/><path d="M320.5 7.5 V11" stroke="#3c3232" stroke-width="1"/><path d="M327.5 9 V11" stroke="#3c3232" stroke-width="1.2"/><path d="M333.5 6 V11" stroke="#3c3232" stroke-width="1"/><path d="M339.5 9 V11" stroke="#3c3232" stroke-width="1.2"/><path d="M346.5 7.5 V11" stroke="#3c3232" stroke-width="1"/><path d="M352.5 9 V11" stroke="#3c3232" stroke-width="1.2"/><path d="M359.5 0 V11" stroke="#3c3232" stroke-width="1"/><text x="361.0" y="7" font-size="7" fill="#222" font-family="Liberation Sans">1</text><path d="M365.5 9 V11" stroke="#3c3232" stroke-width="1.2"/><path d="M372.5 7.5 V11" stroke="#3c3232" stroke-width="1"/><path d="M378.5 9 V11" stroke="#3c3232" stroke-width="1.2"/><path d="M384.5 6 V11" stroke="#3c3232" stroke-width="1"/><path d="M391.5 9 V11" stroke="#3c3232" stroke-width="1.2"/><path d="M397.5 7.5 V11" stroke="#3c3232" stroke-width="1"/><path d="M404.5 9 V11" stroke="#3c3232" stroke-width="1.2"/><path d="M410.5 0 V11" stroke="#3c3232" stroke-width="1"/><text x="412.0" y="7" font-size="7" fill="#222" font-family="Liberation Sans">2</text><path d="M417.5 9 V11" stroke="#3c3232" stroke-width="1.2"/><path d="M423.5 7.5 V11" stroke="#3c3232" stroke-width="1"/><path d="M429.5 9 V11" stroke="#3c3232" stroke-width="1.2"/><path d="M436.5 6 V11" stroke="#3c3232" stroke-width="1"/><path d="M442.5 9 V11" stroke="#3c3232" stroke-width="1.2"/><path d="M449.5 7.5 V11" stroke="#3c3232" stroke-width="1"/><path d="M455.5 9 V11" stroke="#3c3232" stroke-width="1.2"/><path d="M462.5 0 V11" stroke="#3c3232" stroke-width="1"/><text x="464.0" y="7" font-size="7" fill="#222" font-family="Liberation Sans">3</text><path d="M468.5 9 V11" stroke="#3c3232" stroke-width="1.2"/><path d="M474.5 7.5 V11" stroke="#3c3232" stroke-width="1"/><path d="M481.5 9 V11" stroke="#3c3232" stroke-width="1.2"/><path d="M487.5 6 V11" stroke="#3c3232" stroke-width="1"/><path d="M494.5 9 V11" stroke="#3c3232" stroke-width="1.2"/><path d="M500.5 7.5 V11" stroke="#3c3232" stroke-width="1"/><path d="M507.5 9 V11" stroke="#3c3232" stroke-width="1.2"/><path d="M513.5 0 V11" stroke="#3c3232" stroke-width="1"/><text x="515.0" y="7" font-size="7" fill="#222" font-family="Liberation Sans">4</text><path d="M519.5 9 V11" stroke="#3c3232" stroke-width="1.2"/><path d="M526.5 7.5 V11" stroke="#3c3232" stroke-width="1"/><path d="M532.5 9 V11" stroke="#3c3232" stroke-width="1.2"/><path d="M539.5 6 V11" stroke="#3c3232" stroke-width="1"/><path d="M545.5 9 V11" stroke="#3c3232" stroke-width="1.2"/><path d="M552.5 7.5 V11" stroke="#3c3232" stroke-width="1"/><path d="M558.5 9 V11" stroke="#3c3232" stroke-width="1.2"/><path d="M564.5 0 V11" stroke="#3c3232" stroke-width="1"/><text x="566.0" y="7" font-size="7" fill="#222" font-family="Liberation Sans">5</text><path d="M571.5 9 V11" stroke="#3c3232" stroke-width="1.2"/><path d="M577.5 7.5 V11" stroke="#3c3232" stroke-width="1"/><path d="M584.5 9 V11" stroke="#3c3232" stroke-width="1.2"/><path d="M590.5 6 V11" stroke="#3c3232" stroke-width="1"/><path d="M597.5 9 V11" stroke="#3c3232" stroke-width="1.2"/><path d="M603.5 7.5 V11" stroke="#3c3232" stroke-width="1"/><path d="M609.5 9 V11" stroke="#3c3232" stroke-width="1.2"/><path d="M616.5 0 V11" stroke="#3c3232" stroke-width="1"/><text x="618.0" y="7" font-size="7" fill="#222" font-family="Liberation Sans">6</text><path d="M622.5 9 V11" stroke="#3c3232" stroke-width="1.2"/><path d="M629.5 7.5 V11" stroke="#3c3232" stroke-width="1"/><path d="M635.5 9 V11" stroke="#3c3232" stroke-width="1.2"/><path d="M642.5 6 V11" stroke="#3c3232" stroke-width="1"/><path d="M648.5 9 V11" stroke="#3c3232" stroke-width="1.2"/><path d="M654.5 7.5 V11" stroke="#3c3232" stroke-width="1"/><path d="M661.5 9 V11" stroke="#3c3232" stroke-width="1.2"/><path d="M667.5 0 V11" stroke="#3c3232" stroke-width="1"/><text x="669.0" y="7" font-size="7" fill="#222" font-family="Liberation Sans">7</text><path d="M674.5 9 V11" stroke="#3c3232" stroke-width="1.2"/><path d="M680.5 7.5 V11" stroke="#3c3232" stroke-width="1"/><path d="M687.5 9 V11" stroke="#3c3232" stroke-width="1.2"/><path d="M693.5 6 V11" stroke="#3c3232" stroke-width="1"/><path d="M699.5 9 V11" stroke="#3c3232" stroke-width="1.2"/><path d="M706.5 7.5 V11" stroke="#3c3232" stroke-width="1"/><path d="M712.5 9 V11" stroke="#3c3232" stroke-width="1.2"/><path d="M719.5 0 V11" stroke="#3c3232" stroke-width="1"/><text x="721.0" y="7" font-size="7" fill="#222" font-family="Liberation Sans">8</text><path d="M725.5 9 V11" stroke="#3c3232" stroke-width="1.2"/><path d="M732.5 7.5 V11" stroke="#3c3232" stroke-width="1"/><path d="M738.5 9 V11" stroke="#3c3232" stroke-width="1.2"/><path d="M744.5 6 V11" stroke="#3c3232" stroke-width="1"/><path d="M751.5 9 V11" stroke="#3c3232" stroke-width="1.2"/><path d="M757.5 7.5 V11" stroke="#3c3232" stroke-width="1"/><path d="M764.5 9 V11" stroke="#3c3232" stroke-width="1.2"/><path d="M770.5 0 V11" stroke="#3c3232" stroke-width="1"/><text x="772.0" y="7" font-size="7" fill="#222" font-family="Liberation Sans">9</text><path d="M777.5 9 V11" stroke="#3c3232" stroke-width="1.2"/><path d="M783.5 7.5 V11" stroke="#3c3232" stroke-width="1"/><path d="M789.5 9 V11" stroke="#3c3232" stroke-width="1.2"/><path d="M796.5 6 V11" stroke="#3c3232" stroke-width="1"/><path d="M802.5 9 V11" stroke="#3c3232" stroke-width="1.2"/><path d="M809.5 7.5 V11" stroke="#3c3232" stroke-width="1"/><path d="M815.5 9 V11" stroke="#3c3232" stroke-width="1.2"/><path d="M822.5 0 V11" stroke="#3c3232" stroke-width="1"/><text x="824.0" y="7" font-size="7" fill="#222" font-family="Liberation Sans">10</text><path d="M828.5 9 V11" stroke="#3c3232" stroke-width="1.2"/><path d="M834.5 7.5 V11" stroke="#3c3232" stroke-width="1"/><path d="M841.5 9 V11" stroke="#3c3232" stroke-width="1.2"/><path d="M847.5 6 V11" stroke="#3c3232" stroke-width="1"/><path d="M854.5 9 V11" stroke="#3c3232" stroke-width="1.2"/><path d="M860.5 7.5 V11" stroke="#3c3232" stroke-width="1"/><path d="M867.5 9 V11" stroke="#3c3232" stroke-width="1.2"/><path d="M873.5 0 V11" stroke="#3c3232" stroke-width="1"/><text x="875.0" y="7" font-size="7" fill="#222" font-family="Liberation Sans">11</text><path d="M879.5 9 V11" stroke="#3c3232" stroke-width="1.2"/><path d="M886.5 7.5 V11" stroke="#3c3232" stroke-width="1"/><path d="M892.5 9 V11" stroke="#3c3232" stroke-width="1.2"/><path d="M899.5 6 V11" stroke="#3c3232" stroke-width="1"/><path d="M905.5 9 V11" stroke="#3c3232" stroke-width="1.2"/><path d="M912.5 7.5 V11" stroke="#3c3232" stroke-width="1"/><path d="M918.5 9 V11" stroke="#3c3232" stroke-width="1.2"/><path d="M924.5 0 V11" stroke="#3c3232" stroke-width="1"/><text x="926.0" y="7" font-size="7" fill="#222" font-family="Liberation Sans">12</text><path d="M931.5 9 V11" stroke="#3c3232" stroke-width="1.2"/><path d="M937.5 7.5 V11" stroke="#3c3232" stroke-width="1"/><path d="M944.5 9 V11" stroke="#3c3232" stroke-width="1.2"/><path d="M950.5 6 V11" stroke="#3c3232" stroke-width="1"/><path d="M957.5 9 V11" stroke="#3c3232" stroke-width="1.2"/><path d="M963.5 7.5 V11" stroke="#3c3232" stroke-width="1"/><path d="M969.5 9 V11" stroke="#3c3232" stroke-width="1.2"/><path d="M976.5 0 V11" stroke="#3c3232" stroke-width="1"/><text x="978.0" y="7" font-size="7" fill="#222" font-family="Liberation Sans">13</text><path d="M982.5 9 V11" stroke="#3c3232" stroke-width="1.2"/><path d="M989.5 7.5 V11" stroke="#3c3232" stroke-width="1"/><path d="M995.5 9 V11" stroke="#3c3232" stroke-width="1.2"/><path d="M1002.5 6 V11" stroke="#3c3232" stroke-width="1"/><path d="M1008.5 9 V11" stroke="#3c3232" stroke-width="1.2"/><path d="M1014.5 7.5 V11" stroke="#3c3232" stroke-width="1"/><path d="M1021.5 9 V11" stroke="#3c3232" stroke-width="1.2"/><path d="M269.5 0 V11" stroke="#777" stroke-dasharray="1.5 1.5"/></svg><svg style="position:absolute;left:24px;top:71px;" width="12" height="639" viewBox="0 0 12 639"><rect x="0" y="0" width="12" height="639" fill="#fff"/><rect x="11" y="0" width="1" height="639" fill="#3c3232"/><path d="M7 17.5 H12" stroke="#3c3232" stroke-width="1"/><path d="M9 23.5 H12" stroke="#3c3232" stroke-width="1"/><path d="M8 29.5 H12" stroke="#3c3232" stroke-width="1"/><path d="M9 36.5 H12" stroke="#3c3232" stroke-width="1"/><path d="M0 42.5 H12" stroke="#707070" stroke-width="1"/><text x="2" y="49.0" font-size="7" fill="#222" font-family="Liberation Sans">0</text><path d="M9 49.5 H12" stroke="#3c3232" stroke-width="1"/><path d="M8 55.5 H12" stroke="#3c3232" stroke-width="1"/><path d="M9 62.5 H12" stroke="#3c3232" stroke-width="1"/><path d="M7 68.5 H12" stroke="#3c3232" stroke-width="1"/><path d="M9 74.5 H12" stroke="#3c3232" stroke-width="1"/><path d="M8 81.5 H12" stroke="#3c3232" stroke-width="1"/><path d="M9 87.5 H12" stroke="#3c3232" stroke-width="1"/><path d="M0 94.5 H12" stroke="#707070" stroke-width="1"/><text x="2" y="101.0" font-size="7" fill="#222" font-family="Liberation Sans">1</text><path d="M9 100.5 H12" stroke="#3c3232" stroke-width="1"/><path d="M8 107.5 H12" stroke="#3c3232" stroke-width="1"/><path d="M9 113.5 H12" stroke="#3c3232" stroke-width="1"/><path d="M7 119.5 H12" stroke="#3c3232" stroke-width="1"/><path d="M9 126.5 H12" stroke="#3c3232" stroke-width="1"/><path d="M8 132.5 H12" stroke="#3c3232" stroke-width="1"/><path d="M9 139.5 H12" stroke="#3c3232" stroke-width="1"/><path d="M0 145.5 H12" stroke="#707070" stroke-width="1"/><text x="2" y="152.0" font-size="7" fill="#222" font-family="Liberation Sans">2</text><path d="M9 152.5 H12" stroke="#3c3232" stroke-width="1"/><path d="M8 158.5 H12" stroke="#3c3232" stroke-width="1"/><path d="M9 164.5 H12" stroke="#3c3232" stroke-width="1"/><path d="M7 171.5 H12" stroke="#3c3232" stroke-width="1"/><path d="M9 177.5 H12" stroke="#3c3232" stroke-width="1"/><path d="M8 184.5 H12" stroke="#3c3232" stroke-width="1"/><path d="M9 190.5 H12" stroke="#3c3232" stroke-width="1"/><path d="M0 197.5 H12" stroke="#707070" stroke-width="1"/><text x="2" y="204.0" font-size="7" fill="#222" font-family="Liberation Sans">3</text><path d="M9 203.5 H12" stroke="#3c3232" stroke-width="1"/><path d="M8 209.5 H12" stroke="#3c3232" stroke-width="1"/><path d="M9 216.5 H12" stroke="#3c3232" stroke-width="1"/><path d="M7 222.5 H12" stroke="#3c3232" stroke-width="1"/><path d="M9 229.5 H12" stroke="#3c3232" stroke-width="1"/><path d="M8 235.5 H12" stroke="#3c3232" stroke-width="1"/><path d="M9 242.5 H12" stroke="#3c3232" stroke-width="1"/><path d="M0 248.5 H12" stroke="#707070" stroke-width="1"/><text x="2" y="255.0" font-size="7" fill="#222" font-family="Liberation Sans">4</text><path d="M9 254.5 H12" stroke="#3c3232" stroke-width="1"/><path d="M8 261.5 H12" stroke="#3c3232" stroke-width="1"/><path d="M9 267.5 H12" stroke="#3c3232" stroke-width="1"/><path d="M7 274.5 H12" stroke="#3c3232" stroke-width="1"/><path d="M9 280.5 H12" stroke="#3c3232" stroke-width="1"/><path d="M8 287.5 H12" stroke="#3c3232" stroke-width="1"/><path d="M9 293.5 H12" stroke="#3c3232" stroke-width="1"/><path d="M0 299.5 H12" stroke="#707070" stroke-width="1"/><text x="2" y="306.0" font-size="7" fill="#222" font-family="Liberation Sans">5</text><path d="M9 306.5 H12" stroke="#3c3232" stroke-width="1"/><path d="M8 312.5 H12" stroke="#3c3232" stroke-width="1"/><path d="M9 319.5 H12" stroke="#3c3232" stroke-width="1"/><path d="M7 325.5 H12" stroke="#3c3232" stroke-width="1"/><path d="M9 332.5 H12" stroke="#3c3232" stroke-width="1"/><path d="M8 338.5 H12" stroke="#3c3232" stroke-width="1"/><path d="M9 344.5 H12" stroke="#3c3232" stroke-width="1"/><path d="M0 351.5 H12" stroke="#707070" stroke-width="1"/><text x="2" y="358.0" font-size="7" fill="#222" font-family="Liberation Sans">6</text><path d="M9 357.5 H12" stroke="#3c3232" stroke-width="1"/><path d="M8 364.5 H12" stroke="#3c3232" stroke-width="1"/><path d="M9 370.5 H12" stroke="#3c3232" stroke-width="1"/><path d="M7 377.5 H12" stroke="#3c3232" stroke-width="1"/><path d="M9 383.5 H12" stroke="#3c3232" stroke-width="1"/><path d="M8 389.5 H12" stroke="#3c3232" stroke-width="1"/><path d="M9 396.5 H12" stroke="#3c3232" stroke-width="1"/><path d="M0 402.5 H12" stroke="#707070" stroke-width="1"/><text x="2" y="409.0" font-size="7" fill="#222" font-family="Liberation Sans">7</text><path d="M9 409.5 H12" stroke="#3c3232" stroke-width="1"/><path d="M8 415.5 H12" stroke="#3c3232" stroke-width="1"/><path d="M9 422.5 H12" stroke="#3c3232" stroke-width="1"/><path d="M7 428.5 H12" stroke="#3c3232" stroke-width="1"/><path d="M9 434.5 H12" stroke="#3c3232" stroke-width="1"/><path d="M8 441.5 H12" stroke="#3c3232" stroke-width="1"/><path d="M9 447.5 H12" stroke="#3c3232" stroke-width="1"/><path d="M0 454.5 H12" stroke="#707070" stroke-width="1"/><text x="2" y="461.0" font-size="7" fill="#222" font-family="Liberation Sans">8</text><path d="M9 460.5 H12" stroke="#3c3232" stroke-width="1"/><path d="M8 467.5 H12" stroke="#3c3232" stroke-width="1"/><path d="M9 473.5 H12" stroke="#3c3232" stroke-width="1"/><path d="M7 479.5 H12" stroke="#3c3232" stroke-width="1"/><path d="M9 486.5 H12" stroke="#3c3232" stroke-width="1"/><path d="M8 492.5 H12" stroke="#3c3232" stroke-width="1"/><path d="M9 499.5 H12" stroke="#3c3232" stroke-width="1"/><path d="M0 505.5 H12" stroke="#707070" stroke-width="1"/><text x="2" y="512.0" font-size="7" fill="#222" font-family="Liberation Sans">9</text><path d="M9 512.5 H12" stroke="#3c3232" stroke-width="1"/><path d="M8 518.5 H12" stroke="#3c3232" stroke-width="1"/><path d="M9 524.5 H12" stroke="#3c3232" stroke-width="1"/><path d="M7 531.5 H12" stroke="#3c3232" stroke-width="1"/><path d="M9 537.5 H12" stroke="#3c3232" stroke-width="1"/><path d="M8 544.5 H12" stroke="#3c3232" stroke-width="1"/><path d="M9 550.5 H12" stroke="#3c3232" stroke-width="1"/><path d="M0 557.5 H12" stroke="#707070" stroke-width="1"/><text x="2" y="564.0" font-size="7" fill="#222" font-family="Liberation Sans">1</text><text x="2" y="570.0" font-size="7" fill="#222" font-family="Liberation Sans">0</text><path d="M9 563.5 H12" stroke="#3c3232" stroke-width="1"/><path d="M8 569.5 H12" stroke="#3c3232" stroke-width="1"/><path d="M9 576.5 H12" stroke="#3c3232" stroke-width="1"/><path d="M7 582.5 H12" stroke="#3c3232" stroke-width="1"/><path d="M9 589.5 H12" stroke="#3c3232" stroke-width="1"/><path d="M8 595.5 H12" stroke="#3c3232" stroke-width="1"/><path d="M9 602.5 H12" stroke="#3c3232" stroke-width="1"/><path d="M0 608.5 H12" stroke="#707070" stroke-width="1"/><text x="2" y="615.0" font-size="7" fill="#222" font-family="Liberation Sans">1</text><text x="2" y="621.0" font-size="7" fill="#222" font-family="Liberation Sans">1</text><path d="M9 614.5 H12" stroke="#3c3232" stroke-width="1"/><path d="M8 621.5 H12" stroke="#3c3232" stroke-width="1"/><path d="M9 627.5 H12" stroke="#3c3232" stroke-width="1"/><path d="M7 634.5 H12" stroke="#3c3232" stroke-width="1"/><path d="M0 155.5 H11" stroke="#777" stroke-dasharray="1.5 1.5"/></svg><svg style="position:absolute;left:24px;top:71px;" width="12" height="11" viewBox="0 0 12 11"><rect x="0" y="0" width="12" height="11" fill="#fff"/><rect x="11" y="0" width="1" height="11" fill="#3c3232"/><rect x="0" y="10" width="12" height="1" fill="#3c3232"/><path d="M0 3.5 H11" stroke="#333" stroke-dasharray="1.5 1"/><path d="M4.5 0 V10" stroke="#333" stroke-dasharray="1.5 1"/></svg><div style="left:331px;top:113px;width:438px;height:566px;background:#fff;border-left:1px solid #5a5050;border-top:1px solid #5a5050;box-sizing:border-box"></div><div style="left:768px;top:114px;width:1px;height:565px;background:#888"></div><div style="left:769px;top:114px;width:1px;height:566px;background:#000"></div><div style="left:331px;top:678px;width:438px;height:1px;background:#888"></div><div style="left:332px;top:679px;width:438px;height:1px;background:#000"></div><div style="left:344px;top:125px;width:413px;height:1px;background:#ece4fb"></div><div style="left:344px;top:126px;width:413px;height:1px;background:#ecb0f8"></div><div style="left:344px;top:665px;width:413px;height:1px;background:#efb0f8"></div><div style="left:344px;top:666px;width:413px;height:1px;background:#f8e8fc"></div><div style="left:344px;top:126px;width:1px;height:540px;background:#a855f7"></div><div style="left:755px;top:126px;width:1px;height:540px;background:#f0e6fb"></div><div style="left:756px;top:126px;width:1px;height:540px;background:#d4a0f4"></div><div style="left:345px;top:162px;width:411px;height:1px;background:#3c8cf0"></div><div style="left:345px;top:163px;width:411px;height:1px;background:#dceafc"></div><div style="left:550px;top:127px;width:1px;height:35px;background:#6ea4f4"></div><svg style="position:absolute;left:301px;top:216px;" width="16" height="16" viewBox="0 0 16 16"><g fill="#aab" opacity="0.45" transform="translate(1.5,1.5)"><rect x="2" y="6" width="3.5" height="1.2"/><rect x="8" y="6" width="3.5" height="1.2"/><rect x="6" y="2" width="1.2" height="3.5"/><rect x="6" y="8" width="1.2" height="3.5"/></g><g fill="#000"><rect x="2" y="6" width="3.5" height="1.2"/><rect x="8" y="6" width="3.5" height="1.2"/><rect x="6" y="2" width="1.2" height="3.5"/><rect x="6" y="8" width="1.2" height="3.5"/><rect x="6.1" y="6.1" width="1" height="1"/></g></svg><div style="left:1080px;top:56px;width:1px;height:664px;background:#7a7a80"></div><div style="left:1081px;top:56px;width:1px;height:664px;background:#5a5a62"></div><div style="left:1082px;top:56px;width:118px;height:664px;background:#dddcd5"></div><div style="left:1082px;top:56px;width:118px;height:9px;background:#a0a0a0"></div><div style="left:24px;top:710px;width:196px;height:10px;background:#e6e6e6"></div><div style="left:24px;top:710px;width:196px;height:1px;background:#8a8a8a"></div><div style="left:220px;top:711px;width:850px;height:9px;background:#eeeeee"></div><div style="left:501px;top:711px;width:480px;height:9px;background:#c4c4c4"></div><div style="left:1070px;top:82px;width:10px;height:638px;background:#eeeeee"></div><div style="left:1070px;top:82px;width:10px;height:577px;background:#c4c4c4"></div><div style="left:932px;top:63px;width:150px;height:370px;background:#efefef"></div><div style="left:932px;top:56px;width:148px;height:7px;background:#b0b0b2"></div><div style="left:932px;top:61px;width:148px;height:1px;background:#a4a4a6"></div><div style="left:932px;top:63px;width:150px;height:2px;background:#5a5252"></div><div style="left:932px;top:63px;width:1px;height:370px;background:#5a5252"></div><div style="left:1080px;top:63px;width:1px;height:370px;background:#7a7a80"></div><div style="left:1081px;top:63px;width:1px;height:370px;background:#5a5a62"></div><div style="left:932px;top:432px;width:150px;height:1px;background:#5a5252"></div><div style="left:933px;top:65px;width:147px;height:13px;background:#a4a4a6"></div><div style="left:933px;top:65px;width:147px;height:1px;background:#b4b4b4"></div><div style="left:933px;top:65px;width:33px;height:13px;background:#dddcd5"></div><div style="left:966px;top:65px;width:1px;height:13px;background:#8c8c8c"></div><div style="left:997px;top:65px;width:1px;height:13px;background:#8c8c8c"></div><div style="left:998px;top:65px;width:1px;height:13px;background:#b8b8b8"></div><div style="left:1026px;top:65px;width:1px;height:13px;background:#8c8c8c"></div><div style="left:1027px;top:65px;width:1px;height:13px;background:#b8b8b8"></div><div style="left:933px;top:77px;width:147px;height:1px;background:#8c8c8c"></div><div style="left:933px;top:77px;width:33px;height:1px;background:#dddcd5"></div><svg style="position:absolute;left:935px;top:68px;" width="6" height="8" viewBox="0 0 6 8"><path d="M3 0.5 L5.5 3.2 M3 0.5 L0.5 3.2 M3 7.5 L5.5 4.8 M3 7.5 L0.5 4.8" fill="none" stroke="#555" stroke-width="0.9"/></svg><span class="t" style="left:943px;top:68.5px;font-size:8px;color:#222;font-weight:700;transform:scaleX(0.84);transform-origin:0 0;">Pages</span><span class="t" style="left:972px;top:68.5px;font-size:8px;color:#2a2a2a;font-weight:700;transform:scaleX(0.84);transform-origin:0 0;">Layers</span><span class="t" style="left:1003px;top:68.5px;font-size:8px;color:#2a2a2a;font-weight:700;transform:scaleX(0.86);transform-origin:0 0;">Links</span><svg style="position:absolute;left:1051px;top:69px;" width="8" height="6" viewBox="0 0 8 6"><path d="M0.5 0.5 L3.5 3 L0.5 5.5Z M4 0.5 L7 3 L4 5.5Z" fill="#3a3a44"/></svg><div style="left:1063px;top:65px;width:1px;height:13px;background:#8c8c8c"></div><svg style="position:absolute;left:1067px;top:68px;" width="12" height="8" viewBox="0 0 12 8"><path d="M0.5 3.5 H3.5 L2 5Z" fill="#333"/><path d="M4.5 1.5 H11" stroke="#534" stroke-width="1"/><path d="M4.5 4.5 H11" stroke="#ccc" stroke-width="1"/><path d="M4.5 6.5 H11" stroke="#345" stroke-width="1.2"/></svg><span class="t" style="left:935px;top:87.5px;font-size:8px;color:#1a1a30;font-weight:400;transform:scaleX(0.86);transform-origin:0 0;">[None]</span><span class="t" style="left:935px;top:108px;font-size:8px;color:#1a1a1a;font-weight:400;transform:scaleX(0.86);transform-origin:0 0;">A-Master</span><div style="left:1050px;top:80px;width:14px;height:18px;background:#fff;border:1px solid #222;border-right-color:#444;box-sizing:border-box"></div><div style="left:1037px;top:101px;width:27px;height:18px;background:#fff;border:1px solid #222;box-sizing:border-box"></div><div style="left:1050px;top:101px;width:1px;height:18px;background:#222"></div><svg style="position:absolute;left:1073px;top:83px;" width="7" height="4" viewBox="0 0 7 4"><path d="M0.5 3.5 L3.5 0.5 L6.5 3.5" fill="none" stroke="#c4c4c4" stroke-width="1"/></svg><svg style="position:absolute;left:1073px;top:114px;" width="7" height="4" viewBox="0 0 7 4"><path d="M0.5 0.5 L3.5 3.5 L6.5 0.5" fill="none" stroke="#c4c4c4" stroke-width="1"/></svg><div style="left:933px;top:121px;width:147px;height:1px;background:#7a7a7a"></div><div style="left:933px;top:122px;width:147px;height:2px;background:#fbfbfb"></div><div style="left:933px;top:124px;width:147px;height:1px;background:#8a8a8a"></div><div style="left:1002px;top:126px;width:1px;height:34px;background:#111"></div><svg style="position:absolute;left:1008px;top:126px;" width="8" height="5" viewBox="0 0 8 5"><path d="M0 0 H8 L4 4.5Z" fill="#111"/></svg><div style="left:1003px;top:131px;width:19px;height:26px;background:#98c4ec;border-right:1px solid #777;border-bottom:1px solid #777;box-sizing:border-box"></div><div style="left:1003px;top:133px;width:12px;height:1px;background:#5aa0e0"></div><div style="left:1015px;top:131px;width:6px;height:7px;background:#fff"></div><span class="t" style="left:1015.2px;top:130.5px;font-size:8px;color:#222;font-weight:700;">A</span><div style="left:1007px;top:160px;width:9px;height:8px;background:#111"></div><span class="t" style="left:1009.5px;top:160.5px;font-size:7px;color:#fff;font-weight:700;">1</span><svg style="position:absolute;left:1073px;top:130px;" width="7" height="4" viewBox="0 0 7 4"><path d="M0.5 3.5 L3.5 0.5 L6.5 3.5" fill="none" stroke="#c4c4c4" stroke-width="1"/></svg><svg style="position:absolute;left:1072px;top:407px;" width="7" height="4" viewBox="0 0 7 4"><path d="M0.5 0.5 L3.5 3.5 L6.5 0.5" fill="none" stroke="#c4c4c4" stroke-width="1"/></svg><div style="left:933px;top:415px;width:147px;height:1px;background:#8a8a8a"></div><span class="t" style="left:935px;top:417px;font-size:8px;color:#222;font-weight:400;transform:scaleX(0.82);transform-origin:0 0;">1 Page in 1 Spread</span><svg style="position:absolute;left:1009px;top:416px;" width="15" height="10" viewBox="0 0 15 10"><rect x="4.5" y="0.5" width="6" height="7" fill="#fff" stroke="#555"/><rect x="1.5" y="3.5" width="7" height="5.5" fill="#fff" stroke="#444"/><path d="M11 7 H14 L12.5 9Z" fill="#222"/></svg><svg style="position:absolute;left:1033px;top:417px;" width="9" height="9" viewBox="0 0 9 9"><rect x="0.5" y="0.5" width="8" height="8" fill="#fff" stroke="#888"/><path d="M7.5 1.5 V8 H3 M5.5 5 V8" stroke="#111" stroke-width="1.4" fill="none"/></svg><svg style="position:absolute;left:1055px;top:416px;" width="8" height="10" viewBox="0 0 8 10"><path d="M0.5 2.5 H7.5 M2.5 2.5 V1 H5.5 V2.5 M1.5 3 L2 9.5 H6 L6.5 3" stroke="#bbb" fill="none"/></svg><svg style="position:absolute;left:1072px;top:418px;" width="7" height="8" viewBox="0 0 7 8"><rect x="5" y="0" width="1" height="1" fill="#777"/><rect x="3" y="3" width="1" height="1" fill="#777"/><rect x="5" y="3" width="1" height="1" fill="#777"/><rect x="1" y="6" width="1" height="1" fill="#777"/><rect x="3" y="6" width="1" height="1" fill="#777"/><rect x="5" y="6" width="1" height="1" fill="#777"/></svg><div style="left:933px;top:426px;width:147px;height:1px;background:#8a8a8a"></div><div style="left:1000.0px;top:429px;width:1.5px;height:1.2px;background:#777"></div><div style="left:1002.6px;top:429px;width:1.5px;height:1.2px;background:#777"></div><div style="left:1005.2px;top:429px;width:1.5px;height:1.2px;background:#777"></div><div style="left:1007.8px;top:429px;width:1.5px;height:1.2px;background:#777"></div><div style="left:1010.4px;top:429px;width:1.5px;height:1.2px;background:#777"></div><div style="left:1082px;top:56px;width:118px;height:3px;background:#b4b4b4"></div><svg style="position:absolute;left:1190px;top:58px;" width="7" height="4" viewBox="0 0 7 4"><path d="M3 0 L1 2 L3 4Z M6 0 L4 2 L6 4Z" fill="#444"/></svg><div style="left:1082px;top:65px;width:118px;height:148px;background:#efefef"></div><div style="left:1082px;top:64px;width:118px;height:1px;background:#5e6464"></div><div style="left:1082px;top:65px;width:118px;height:8px;background:#dddcd5"></div><div style="left:1133.0px;top:68px;width:1.6px;height:1.2px;background:#888"></div><div style="left:1135.8px;top:68px;width:1.6px;height:1.2px;background:#888"></div><div style="left:1138.6px;top:68px;width:1.6px;height:1.2px;background:#888"></div><div style="left:1141.4px;top:68px;width:1.6px;height:1.2px;background:#888"></div><div style="left:1144.2px;top:68px;width:1.6px;height:1.2px;background:#888"></div><div style="left:1085px;top:73px;width:112px;height:17px;background:#b0b0b0;border:1px solid #7c7c7c;box-sizing:border-box;border-radius:2px"></div><svg style="position:absolute;left:1089px;top:75px;" width="14" height="13" viewBox="0 0 14 13"><path d="M1 2.5 Q3.5 1.3 6.5 2.5 V11.5 Q3.5 10.3 1 11.5Z M13 2.5 Q10 1.3 7 2.5 V11.5 Q10 10.3 13 11.5Z" fill="#f4f4f4" stroke="#333" stroke-width="0.9"/><path d="M7 0.5 V12.5" stroke="#777"/></svg><span class="t" style="left:1108px;top:78px;font-size:8.5px;color:#222;font-weight:700;transform:scaleX(0.81);transform-origin:0 0;">Pages</span><svg style="position:absolute;left:1089px;top:95px;" width="15" height="14" viewBox="0 0 15 14"><path d="M7.5 6.5 L14 9.5 L7.5 13 L1 9.5Z" fill="#333"/><path d="M7.5 1 L14 4.5 L7.5 8 L1 4.5Z" fill="#f4f4f4" stroke="#555" stroke-width="0.9"/></svg><span class="t" style="left:1108px;top:97.5px;font-size:8.5px;color:#222;font-weight:700;transform:scaleX(0.81);transform-origin:0 0;">Layers</span><svg style="position:absolute;left:1089px;top:115px;" width="15" height="13" viewBox="0 0 15 13"><ellipse cx="4" cy="4" rx="3" ry="2.6" fill="none" stroke="#333" stroke-width="1.4" transform="rotate(35 4 4)"/><ellipse cx="10.5" cy="8.5" rx="3" ry="2.6" fill="none" stroke="#333" stroke-width="1.4" transform="rotate(35 10.5 8.5)"/></svg><span class="t" style="left:1108px;top:117.5px;font-size:8.5px;color:#222;font-weight:700;transform:scaleX(0.81);transform-origin:0 0;">Links</span><div style="left:1082px;top:133px;width:118px;height:1px;background:#6a6a6e"></div><div style="left:1082px;top:134px;width:118px;height:8px;background:#dddcd5"></div><div style="left:1133.0px;top:137px;width:1.6px;height:1.2px;background:#888"></div><div style="left:1135.8px;top:137px;width:1.6px;height:1.2px;background:#888"></div><div style="left:1138.6px;top:137px;width:1.6px;height:1.2px;background:#888"></div><div style="left:1141.4px;top:137px;width:1.6px;height:1.2px;background:#888"></div><div style="left:1144.2px;top:137px;width:1.6px;height:1.2px;background:#888"></div><svg style="position:absolute;left:1090px;top:145px;" width="12" height="12" viewBox="0 0 12 12"><path d="M0 0.5 H12" stroke="#666" stroke-dasharray="1 1"/><rect x="0" y="3" width="12" height="1.5" fill="#999"/><rect x="0" y="5.5" width="12" height="2" fill="#777"/><rect x="0" y="9" width="12" height="2.5" fill="#333"/></svg><span class="t" style="left:1108px;top:147.5px;font-size:8.5px;color:#222;font-weight:700;transform:scaleX(0.81);transform-origin:0 0;">Stroke</span><svg style="position:absolute;left:1089px;top:165px;" width="15" height="12" viewBox="0 0 15 12"><path d="M2 10 Q-1 5 4 2 Q9 -1 13 2 Q15 4 12 6 Q10 7 12 9 Q10 12 6 11.5 Q3 11.5 2 10Z" fill="#333"/><circle cx="4" cy="8" r="1.2" fill="#eee"/><circle cx="7.5" cy="9.2" r="1.2" fill="#eee"/><circle cx="6" cy="4" r="1.2" fill="#ddd"/><circle cx="9.5" cy="3.5" r="1.1" fill="#ddd"/></svg><span class="t" style="left:1108px;top:167.5px;font-size:8.5px;color:#222;font-weight:700;transform:scaleX(0.81);transform-origin:0 0;">Color</span><div style="left:1082px;top:183px;width:118px;height:1px;background:#6a6a6e"></div><div style="left:1082px;top:184px;width:118px;height:8px;background:#dddcd5"></div><div style="left:1133.0px;top:187px;width:1.6px;height:1.2px;background:#888"></div><div style="left:1135.8px;top:187px;width:1.6px;height:1.2px;background:#888"></div><div style="left:1138.6px;top:187px;width:1.6px;height:1.2px;background:#888"></div><div style="left:1141.4px;top:187px;width:1.6px;height:1.2px;background:#888"></div><div style="left:1144.2px;top:187px;width:1.6px;height:1.2px;background:#888"></div><svg style="position:absolute;left:1090px;top:195px;" width="12" height="10" viewBox="0 0 12 10"><rect x="0" y="0" width="12" height="10" fill="#2a2a2a"/><rect x="1.0" y="1" width="1.5" height="2" fill="#888"/><rect x="3.2" y="1" width="1.5" height="2" fill="#888"/><rect x="5.4" y="1" width="1.5" height="2" fill="#888"/><rect x="7.6" y="1" width="1.5" height="2" fill="#888"/><rect x="9.8" y="1" width="1.5" height="2" fill="#888"/><rect x="1.0" y="4" width="1.5" height="2" fill="#bbb"/><rect x="3.2" y="4" width="1.5" height="2" fill="#bbb"/><rect x="5.4" y="4" width="1.5" height="2" fill="#bbb"/><rect x="7.6" y="4" width="1.5" height="2" fill="#bbb"/><rect x="9.8" y="4" width="1.5" height="2" fill="#bbb"/><rect x="1.0" y="7" width="1.5" height="2" fill="#fff"/><rect x="3.2" y="7" width="1.5" height="2" fill="#fff"/><rect x="5.4" y="7" width="1.5" height="2" fill="#fff"/><rect x="7.6" y="7" width="1.5" height="2" fill="#fff"/><rect x="9.8" y="7" width="1.5" height="2" fill="#fff"/></svg><span class="t" style="left:1108px;top:196.5px;font-size:8.5px;color:#222;font-weight:700;transform:scaleX(0.81);transform-origin:0 0;">Swatches</span><div style="left:1082px;top:212px;width:118px;height:1px;background:#6a6a6e"></div><svg style="position:absolute;left:26px;top:712px;" width="6" height="7" viewBox="0 0 6 7"><path d="M0.5 0 V7" stroke="#888"/><path d="M5.5 0.5 L2 3.5 L5.5 6.5Z" fill="#aaa"/></svg><svg style="position:absolute;left:38px;top:712px;" width="5" height="7" viewBox="0 0 5 7"><path d="M4 0.5 L1 3.5 L4 6.5Z" fill="#aaa"/></svg><div style="left:45px;top:711px;width:70px;height:9px;background:#fff"></div><span class="t" style="left:46px;top:711px;font-size:7px;color:#222;font-weight:700;">1</span><svg style="position:absolute;left:106px;top:716px;" width="7" height="4" viewBox="0 0 7 4"><path d="M0.5 0.5 L3.5 3.5 L6.5 0.5" fill="none" stroke="#555" stroke-width="1"/></svg><div style="left:115px;top:711px;width:1px;height:9px;background:#c8c8c8"></div><svg style="position:absolute;left:119px;top:712px;" width="5" height="7" viewBox="0 0 5 7"><path d="M1 0.5 L4 3.5 L1 6.5Z" fill="#aaa"/></svg><svg style="position:absolute;left:127px;top:712px;" width="7" height="7" viewBox="0 0 7 7"><path d="M1 0.5 L4 3.5 L1 6.5Z" fill="#aaa"/><path d="M6 0 V7" stroke="#888"/></svg><svg style="position:absolute;left:140px;top:711px;" width="12" height="9" viewBox="0 0 12 9"><circle cx="5" cy="5" r="4" fill="none" stroke="#777" stroke-width="1.5"/><path d="M4 3 V7 H6.5" stroke="#777" fill="none"/><rect x="9" y="7" width="2" height="2" fill="#444"/></svg><svg style="position:absolute;left:157px;top:711px;" width="10" height="9" viewBox="0 0 10 9"><defs><radialGradient id="gg" cx="0.4" cy="0.35" r="0.6"><stop offset="0" stop-color="#7cff6a"/><stop offset="1" stop-color="#14b814"/></radialGradient></defs><circle cx="5" cy="5" r="4.2" fill="url(#gg)"/></svg><span class="t" style="left:169px;top:712px;font-size:8px;color:#333;font-weight:400;transform:scaleX(0.82);transform-origin:0 0;">No errors</span><svg style="position:absolute;left:211px;top:714px;" width="6" height="4" viewBox="0 0 6 4"><path d="M0.5 0.5 H5.5 L3 3Z" fill="#333"/></svg><svg style="position:absolute;left:223px;top:712px;" width="6" height="7" viewBox="0 0 6 7"><path d="M5 0.8 L1.5 3.5 L5 6.2" fill="none" stroke="#444" stroke-width="1.4"/></svg><svg style="position:absolute;left:1048px;top:713px;" width="6" height="7" viewBox="0 0 6 7"><path d="M1 0.8 L4.5 3.5 L1 6.2" fill="none" stroke="#444" stroke-width="1.4"/></svg><div style="left:1058px;top:711px;width:4px;height:9px;background:linear-gradient(#b0b0b0,#888)"></div><div style="left:1063px;top:711px;width:4px;height:9px;background:linear-gradient(#b0b0b0,#888)"></div><svg style="position:absolute;left:1071px;top:711px;" width="9" height="9" viewBox="0 0 9 9"><rect x="6" y="1" width="1" height="1" fill="#888"/><rect x="4" y="4" width="1" height="1" fill="#888"/><rect x="6" y="4" width="1" height="1" fill="#888"/><rect x="2" y="7" width="1" height="1" fill="#888"/><rect x="4" y="7" width="1" height="1" fill="#888"/><rect x="6" y="7" width="1" height="1" fill="#888"/></svg><svg style="position:absolute;left:1071px;top:702px;" width="8" height="6" viewBox="0 0 8 6"><path d="M0.8 0.8 L3.8 4 L6.8 0.8" fill="none" stroke="#444" stroke-width="1.5"/></svg>
</body></html>
